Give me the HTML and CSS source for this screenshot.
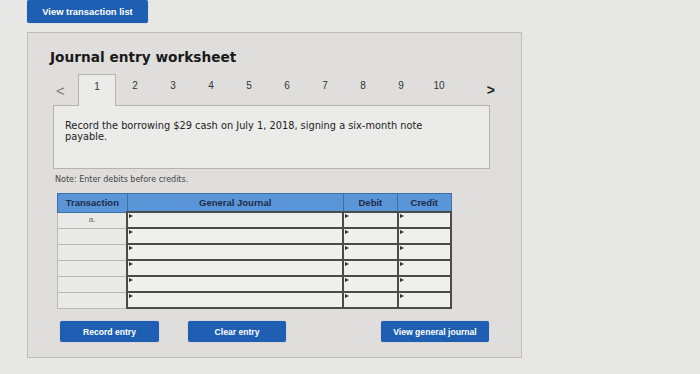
FILE: index.html
```html
<!DOCTYPE html>
<html>
<head>
    <title>Journal entry worksheet</title>
    <link rel="stylesheet" href="styles.css">
</head>
<body>
    <button class="btn btn-top" type="button">View transaction list</button>

    <div class="panel">
        <h2 class="title">Journal entry worksheet</h2>

        <div class="tabs">
            <span class="arrow">&lt;</span>
            <span class="tab active">1</span>
            <span class="tab">2</span>
            <span class="tab">3</span>
            <span class="tab">4</span>
            <span class="tab">5</span>
            <span class="tab">6</span>
            <span class="tab">7</span>
            <span class="tab">8</span>
            <span class="tab">9</span>
            <span class="tab">10</span>
            <span class="arrow arrow-next">&gt;</span>
        </div>

        <div class="question">
            Record the borrowing $29 cash on July 1, 2018, signing a six-month note payable.
        </div>

        <p class="note">Note: Enter debits before credits.</p>

        <table class="journal">
            <thead>
                <tr>
                    <th class="col-tr">Transaction</th>
                    <th class="col-gj">General Journal</th>
                    <th class="col-debit">Debit</th>
                    <th class="col-credit">Credit</th>
                </tr>
            </thead>
            <tbody>
                <tr><td class="tr">a.</td><td class="in"></td><td class="in"></td><td class="in"></td></tr>
                <tr><td class="tr"></td><td class="in"></td><td class="in"></td><td class="in"></td></tr>
                <tr><td class="tr"></td><td class="in"></td><td class="in"></td><td class="in"></td></tr>
                <tr><td class="tr"></td><td class="in"></td><td class="in"></td><td class="in"></td></tr>
                <tr><td class="tr"></td><td class="in"></td><td class="in"></td><td class="in"></td></tr>
                <tr><td class="tr"></td><td class="in"></td><td class="in"></td><td class="in"></td></tr>
            </tbody>
        </table>

        <div class="actions">
            <button class="btn btn-record" type="button">Record entry</button>
            <button class="btn btn-clear" type="button">Clear entry</button>
            <button class="btn btn-view" type="button">View general journal</button>
        </div>
    </div>
</body>
</html>
```

FILE: styles.css
```css
body {
    font-family: "DejaVu Sans", Verdana, sans-serif;
    background-color: #e7e7e5;
    margin: 0;
    height: 374px;
    overflow: hidden;
}

.btn {
    background-color: #1f5fb3;
    color: #fff;
    border: none;
    border-radius: 2px;
    font-family: "Liberation Sans", Arial, sans-serif;
    font-weight: bold;
    font-size: 8.6px;
    padding: 0;
    cursor: pointer;
    box-shadow: 0 0 1px rgba(0, 0, 0, 0.3);
}

.btn-top {
    display: block;
    margin-left: 27px;
    width: 121px;
    height: 23px;
    font-size: 9.4px;
}

.panel {
    margin: 9px 0 0 27px;
    width: 495px;
    height: 326px;
    border: 1px solid #bdbdbb;
    background-color: #dfdedc;
    box-sizing: border-box;
}

.title {
    font-size: 13.7px;
    font-weight: bold;
    color: #1a1a1a;
    margin: 16px 0 0 22px;
}

.tabs {
    display: flex;
    align-items: center;
    margin: 9px 0 0 25px;
    height: 32px;
    font-family: "Liberation Sans", Arial, sans-serif;
    font-size: 10px;
    color: #333;
}

.arrow {
    width: 25px;
    font-size: 15px;
    color: #777;
    padding-left: 3px;
    box-sizing: border-box;
}

.arrow-next {
    margin-left: auto;
    margin-right: 26px;
    width: auto;
    color: #222;
    font-weight: bold;
    font-size: 14px;
}

.tab {
    width: 38px;
    height: 32px;
    line-height: 24px;
    text-align: center;
    box-sizing: border-box;
}

.tab.active {
    border: 1px solid #b3b3b1;
    border-bottom: none;
    background-color: #ebebe9;
    position: relative;
    z-index: 1;
}

.question {
    margin: -1px 0 0 25px;
    width: 437px;
    height: 64px;
    box-sizing: border-box;
    border: 1px solid #b3b3b1;
    background-color: #ebebe9;
    padding: 14px 60px 0 11px;
    font-size: 9.8px;
    line-height: 11px;
    color: #222;
}

.note {
    margin: 6px 0 0 27px;
    font-size: 8px;
    color: #444;
}

.journal {
    margin: 9px 0 0 29px;
    border-collapse: collapse;
    width: 395px;
    font-family: "Liberation Sans", Arial, sans-serif;
}

.journal th {
    background-color: #5a95d8;
    color: #1c2c48;
    font-size: 9.5px;
    font-weight: bold;
    height: 17px;
    padding: 0;
    border: 1px solid #3f6fa8;
}

.col-tr {
    width: 69px;
}

.col-gj {
    width: 219px;
}

.col-debit {
    width: 54px;
}

.col-credit {
    width: 53px;
}

.journal td {
    height: 13px;
    padding: 0;
}

.journal td.tr {
    background-color: #e9e9e7;
    border: 1px solid #b9b9b7;
    text-align: center;
    font-size: 8px;
    color: #666;
    vertical-align: top;
    padding-top: 2px;
}

.journal td.in {
    background-color: #efefed;
    border: 2px solid #4a4a4a;
    position: relative;
}

.journal td.in::before {
    content: "";
    position: absolute;
    left: 1px;
    top: 1px;
    border-left: 4px solid #333;
    border-top: 2px solid transparent;
    border-bottom: 2px solid transparent;
}

.actions {
    display: flex;
    margin: 12px 0 0 32px;
}

.btn-record {
    width: 99px;
    height: 21px;
}

.btn-clear {
    width: 98px;
    height: 21px;
    margin-left: 29px;
}

.btn-view {
    width: 108px;
    height: 21px;
    margin-left: 95px;
}
```
